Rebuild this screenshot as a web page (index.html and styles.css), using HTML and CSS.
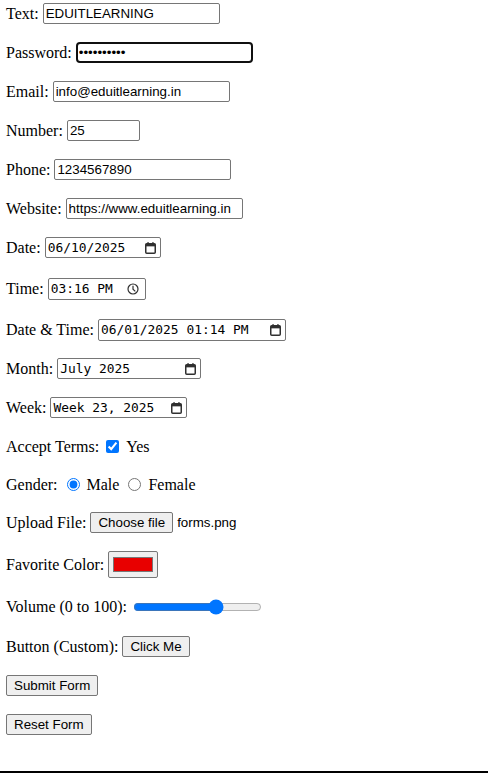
FILE: index.html
```html
<!DOCTYPE html>
<html>
<head>
<meta charset="utf-8">
<link rel="stylesheet" href="styles.css">
</head>
<body>
<form class="form">
  <p class="row">Text: <input class="txt" type="text" value="EDUITLEARNING"></p>
  <p class="row">Password: <input class="txt pw" type="password" value="abcdefghij" autofocus></p>
  <p class="row">Email: <input class="txt" type="email" value="info@eduitlearning.in"></p>
  <p class="row">Number: <input class="txt num" type="number" value="25"></p>
  <p class="row">Phone: <input class="txt" type="tel" value="1234567890"></p>
  <p class="row">Website: <input class="txt" type="url" value="https://www.eduitlearning.in"></p>
  <p class="row">Date: <span class="dt date"><span>06/10/2025</span><svg class="ico" width="11" height="12" viewBox="0 0 11 12"><rect x="0.75" y="1.75" width="9.5" height="9.5" rx="1" fill="none" stroke="#303030" stroke-width="1.5"/><rect x="0.75" y="1.75" width="9.5" height="2.6" fill="#303030"/><rect x="2.3" y="0.2" width="1.5" height="2" fill="#303030"/><rect x="7.2" y="0.2" width="1.5" height="2" fill="#303030"/></svg></span></p>
  <p class="row gap2">Time: <span class="dt time"><span>03:16 PM</span><svg class="ico" width="12" height="12" viewBox="0 0 12 12"><circle cx="6" cy="6" r="5" fill="none" stroke="#303030" stroke-width="1.2"/><path d="M6 2.8V6.2L8.3 8.4" fill="none" stroke="#303030" stroke-width="1.2"/></svg></span></p>
  <p class="row gap2">Date &amp; Time: <span class="dt dtl"><span>06/01/2025 01:14 PM</span><svg class="ico" width="11" height="12" viewBox="0 0 11 12"><rect x="0.75" y="1.75" width="9.5" height="9.5" rx="1" fill="none" stroke="#303030" stroke-width="1.5"/><rect x="0.75" y="1.75" width="9.5" height="2.6" fill="#303030"/><rect x="2.3" y="0.2" width="1.5" height="2" fill="#303030"/><rect x="7.2" y="0.2" width="1.5" height="2" fill="#303030"/></svg></span></p>
  <p class="row">Month: <span class="dt month"><span>July 2025</span><svg class="ico" width="11" height="12" viewBox="0 0 11 12"><rect x="0.75" y="1.75" width="9.5" height="9.5" rx="1" fill="none" stroke="#303030" stroke-width="1.5"/><rect x="0.75" y="1.75" width="9.5" height="2.6" fill="#303030"/><rect x="2.3" y="0.2" width="1.5" height="2" fill="#303030"/><rect x="7.2" y="0.2" width="1.5" height="2" fill="#303030"/></svg></span></p>
  <p class="row">Week: <span class="dt week"><span>Week 23, 2025</span><svg class="ico" width="11" height="12" viewBox="0 0 11 12"><rect x="0.75" y="1.75" width="9.5" height="9.5" rx="1" fill="none" stroke="#303030" stroke-width="1.5"/><rect x="0.75" y="1.75" width="9.5" height="2.6" fill="#303030"/><rect x="2.3" y="0.2" width="1.5" height="2" fill="#303030"/><rect x="7.2" y="0.2" width="1.5" height="2" fill="#303030"/></svg></span></p>
  <p class="row">Accept Terms: <input class="chk" type="checkbox" checked> Yes</p>
  <p class="row up1">Gender: <input class="rad" type="radio" name="g" checked> Male <input class="rad" type="radio" name="g"> Female</p>
  <p class="row up1">Upload File: <span class="btn">Choose file</span> <span class="fname">forms.png</span></p>
  <p class="row tall down1">Favorite Color: <input class="color" type="color" value="#e80000"></p>
  <p class="row down1">Volume (0 to 100): <input class="range" type="range" min="0" max="100" value="66"></p>
  <p class="row down1">Button (Custom): <button class="btn" type="button">Click Me</button></p>
  <p class="row"><button class="btn" type="submit">Submit Form</button></p>
  <p class="row"><button class="btn" type="reset">Reset Form</button></p>
</form>
<div class="rule"></div>
</body>
</html>
```

FILE: styles.css
```css
html, body {
  margin: 0;
  background: #fff;
}
body {
  padding: 2px 6px 0 6px;
  height: 773px;
  box-sizing: border-box;
  display: flex;
  flex-direction: column;
  font-family: "Liberation Serif", "Times New Roman", serif;
  font-size: 16px;
  color: #000;
}
.form {
  display: flex;
  flex-direction: column;
  gap: 16px;
}
.row {
  display: flex;
  align-items: center;
  gap: 4px;
  height: 23px;
  margin: 0;
  white-space: nowrap;
}
.row.gap2 { margin-top: 2px; }
.row.up1 { margin-top: -1px; }
.row.down1 { margin-top: 1px; }
.row.tall { height: 27px; }

.txt {
  font-family: "Liberation Sans", Arial, sans-serif;
  font-size: 13.333px;
  width: 177px;
  height: 21px;
  box-sizing: border-box;
  margin: 0;
  padding: 1px 2px;
  border: 1px solid #767676;
  border-radius: 2px;
  color: #000;
  background: #fff;
}
.pw, .pw:focus {
  border: 2px solid #101010;
  border-radius: 4px;
  padding: 0 1px;
  outline: none;
}
.num { width: 73px; }

.dt {
  display: inline-flex;
  align-items: center;
  justify-content: space-between;
  box-sizing: border-box;
  height: 21px;
  padding: 0 4px 0 2px;
  border: 1px solid #767676;
  border-radius: 2px;
  font-family: "DejaVu Sans Mono", "Liberation Mono", monospace;
  font-size: 12.9px;
  color: #000;
  background: #fff;
}
.dt .ico { flex: none; }
.date { width: 116px; }
.time { width: 98px; height: 22px; padding-right: 6px; }
.dtl { width: 188px; height: 22px; }
.month { width: 144px; }
.week { width: 137px; }

.chk {
  margin: 3px;
  width: 13px;
  height: 13px;
  accent-color: #0075ff;
}
.rad {
  margin: 2px 3px 2px 5px;
  width: 13px;
  height: 13px;
  accent-color: #0075ff;
}
.btn {
  display: inline-flex;
  align-items: center;
  box-sizing: border-box;
  height: 21px;
  margin: 0;
  padding: 0 7px;
  border: 1px solid #767676;
  border-radius: 2px;
  background: #efefef;
  color: #000;
  font-family: "Liberation Sans", Arial, sans-serif;
  font-size: 13.333px;
}
.fname {
  font-family: "Liberation Sans", Arial, sans-serif;
  font-size: 13.333px;
}
.color {
  width: 50px;
  height: 27px;
  box-sizing: border-box;
  margin: 0;
  padding: 1px 2px;
  border: 1px solid #767676;
  border-radius: 2px;
  background: #efefef;
}
.range {
  width: 129px;
  margin: 2px;
  accent-color: #0075ff;
}
.rule {
  margin-top: auto;
  height: 0;
  border-top: 2px solid #000;
  margin-left: -6px;
  margin-right: -6px;
}
```
